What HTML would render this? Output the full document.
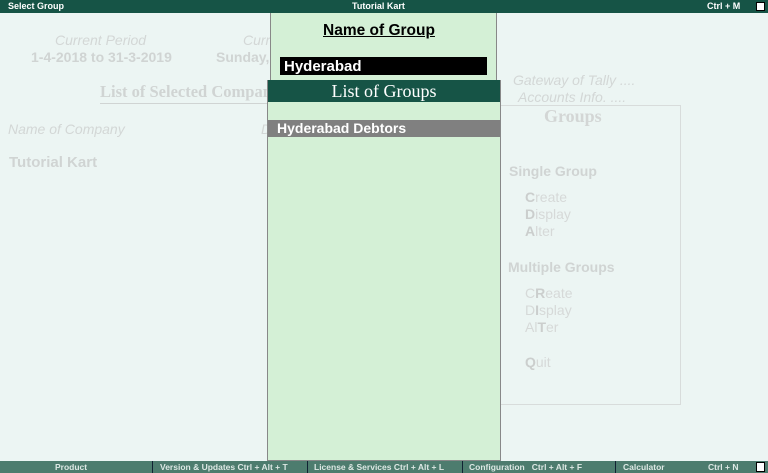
<!DOCTYPE html>
<html><head><style>
*{margin:0;padding:0;box-sizing:border-box}
body{width:768px;height:473px;overflow:hidden;background:#ecf5f3;position:relative;font-family:"Liberation Sans",sans-serif}
.a{position:absolute;white-space:nowrap}
.fi{color:#d3d7d6;font-style:italic;font-size:14px}
.fb{color:#d0d4d3;font-weight:bold;font-size:14px}
.m{color:#d6d9d8;font-size:14px}
.m b{color:#cbcecd}
</style></head><body>
<div class="a" style="left:0;top:0;width:768px;height:13px;background:#165446;color:#fff;font-size:9px;font-weight:bold;line-height:13px">
<span class="a" style="left:8px">Select Group</span>
<span class="a" style="left:352px">Tutorial Kart</span>
<span class="a" style="left:707px">Ctrl + M</span>
<span class="a" style="left:756px;top:2px;width:9px;height:9px;background:#fff;border:1px solid #000"></span>
</div>
<div class="a fi" style="left:55px;top:32px">Current Period</div>
<div class="a fb" style="left:31px;top:49px">1-4-2018 to 31-3-2019</div>
<div class="a fi" style="left:243px;top:32px">Curr</div>
<div class="a fb" style="left:216px;top:49px">Sunday,</div>
<div class="a" style="left:100px;top:82px;font-family:'Liberation Serif',serif;font-weight:bold;font-size:16.5px;color:#d0d4d3;border-bottom:1px solid #d0d4d3;padding-bottom:1px">List of Selected Compani</div>
<div class="a fi" style="left:8px;top:121px">Name of Company</div>
<div class="a fi" style="left:261px;top:121px">D</div>
<div class="a fb" style="left:9px;top:154px;font-size:15px">Tutorial Kart</div>
<div class="a fi" style="left:513px;top:72px">Gateway of Tally ....</div>
<div class="a fi" style="left:518px;top:89px">Accounts Info. ....</div>
<div class="a" style="left:497px;top:105px;width:184px;height:300px;border:1px solid #d8dcdb"></div>
<div class="a" style="left:544px;top:106px;font-family:'Liberation Serif',serif;font-weight:bold;font-size:18px;color:#d3d6d5">Groups</div>
<div class="a fb" style="left:509px;top:163px">Single Group</div>
<div class="a m" style="left:525px;top:189px"><b>C</b>reate</div>
<div class="a m" style="left:525px;top:206px"><b>D</b>isplay</div>
<div class="a m" style="left:525px;top:223px"><b>A</b>lter</div>
<div class="a fb" style="left:508px;top:259px">Multiple Groups</div>
<div class="a m" style="left:525px;top:285px">C<b>R</b>eate</div>
<div class="a m" style="left:525px;top:302px">D<b>I</b>splay</div>
<div class="a m" style="left:525px;top:319px">Al<b>T</b>er</div>
<div class="a m" style="left:525px;top:354px"><b>Q</b>uit</div>
<div class="a" style="left:270px;top:13px;width:227px;height:70px;background:#d4f0d6;border-left:1px solid #888;border-right:1px solid #888"></div>
<div class="a" style="left:323px;top:22px;font-weight:bold;font-size:15.5px;text-decoration:underline;color:#000">Name of Group</div>
<div class="a" style="left:280px;top:57px;width:207px;height:18px;background:#000;color:#fff;font-weight:bold;font-size:15px;line-height:19px;padding-left:4px">Hyderabad</div>
<div class="a" style="left:267px;top:80px;width:234px;height:381px;background:#d4f0d6;border:1px solid #888"></div>
<div class="a" style="left:268px;top:80px;width:232px;height:22px;background:#165446;color:#fff;font-family:'Liberation Serif',serif;font-size:18px;line-height:22px;text-align:center">List of Groups</div>
<div class="a" style="left:268px;top:120px;width:232px;height:17px;background:#808080;color:#fff;font-weight:bold;font-size:14px;line-height:17px;padding-left:9px">Hyderabad Debtors</div>
<div class="a" style="left:0;top:461px;width:768px;height:12px;background:#4d7c6e;color:#dde8e4;font-size:8.5px;line-height:12px;font-weight:bold">
<span class="a" style="left:55px">Product</span>
<span class="a" style="left:152px;top:0;height:12px;border-left:1px solid #123"></span>
<span class="a" style="left:160px">Version &amp; Updates Ctrl + Alt + T</span>
<span class="a" style="left:307px;height:12px;border-left:1px solid #123"></span>
<span class="a" style="left:314px">License &amp; Services Ctrl + Alt + L</span>
<span class="a" style="left:462px;height:12px;border-left:1px solid #123"></span>
<span class="a" style="left:469px">Configuration &nbsp; Ctrl + Alt + F</span>
<span class="a" style="left:615px;height:12px;border-left:1px solid #123"></span>
<span class="a" style="left:623px">Calculator</span>
<span class="a" style="left:708px">Ctrl + N</span>
<span class="a" style="left:756px;top:1px;width:9px;height:10px;background:#fff;border:1px solid #000"></span>
</div>
</body></html>
